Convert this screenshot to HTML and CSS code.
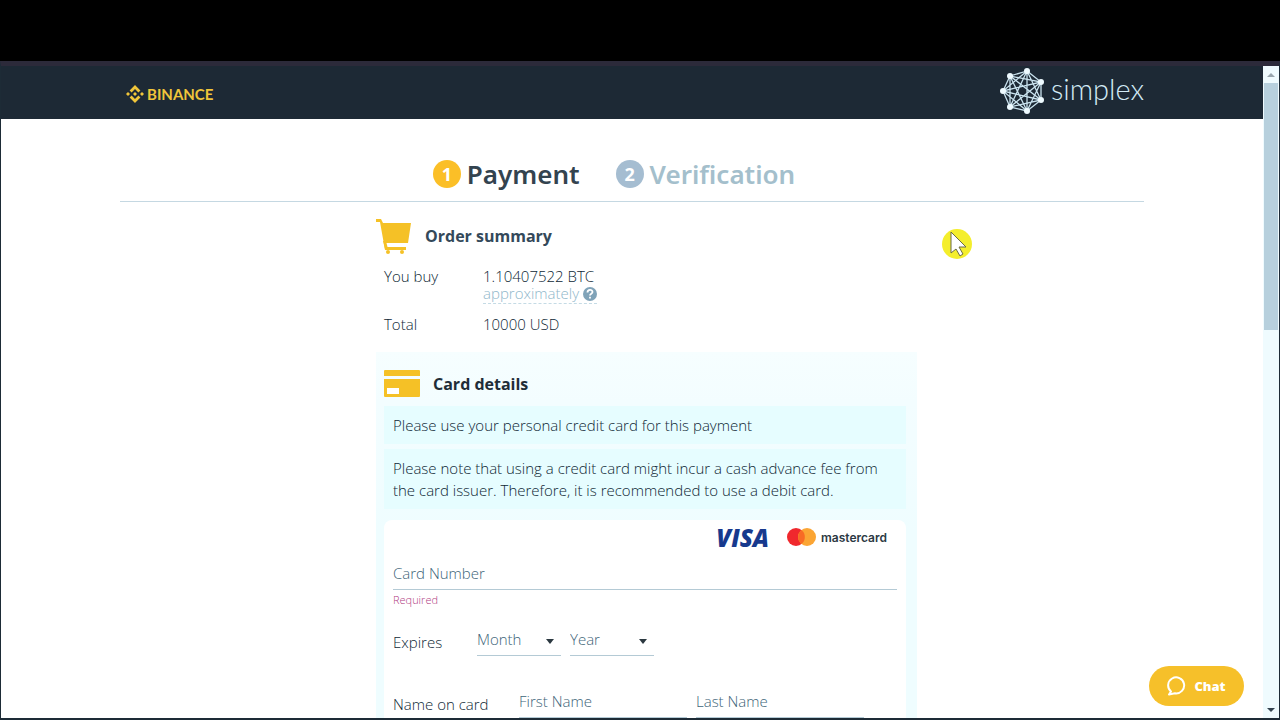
FILE: index.html
```html
<!DOCTYPE html>
<html lang="en">
<head>
    <meta charset="UTF-8">
    <meta name="viewport" content="width=device-width, initial-scale=1.0">
    <title>Simplex Payment</title>
    <link rel="stylesheet" href="styles.css">
</head>
<body>
    <div class="top-bar"></div>
    <div class="window">
        <div class="page">
            <header class="header">
                <div class="container header-inner">
                    <a href="#" class="binance">
                        <svg width="18" height="18" viewBox="0 0 18 18" fill="#f0c53a">
                            <path d="M5.600 7.400L9 4l3.400 3.400 2-2L9 0 3.600 5.400zM0 9l2-2 2 2-2 2zM5.600 10.600L9 14l3.400-3.400 2 2L9 18l-5.400-5.400zM14 9l2-2 2 2-2 2zM11 9L9 7 7 9l2 2z"/>
                        </svg>
                        <span>BINANCE</span>
                    </a>
                    <a href="#" class="simplex">
                        <svg width="45" height="48" viewBox="0 0 45 48">
                            <g fill="none" stroke="#c9e2ee" stroke-width="1.300">
                                <path d="M27 4L10 9 3 24l7 16 17 4 14-11V15z"/>
                                <path d="M27 4L3 24l24 20 14-29L10 9v31l31-7z"/>
                                <path d="M27 4L10 40l31-25L3 24l38 9L10 9l17 35z"/>
                            </g>
                            <g fill="#eefaff">
                                <circle cx="27" cy="4" r="3"/>
                                <circle cx="10" cy="9" r="3"/>
                                <circle cx="3" cy="24" r="3"/>
                                <circle cx="10" cy="40" r="3"/>
                                <circle cx="27" cy="44" r="3"/>
                                <circle cx="41" cy="33" r="3"/>
                                <circle cx="41" cy="15" r="3"/>
                            </g>
                        </svg>
                        <span>simplex</span>
                    </a>
                </div>
            </header>

            <main class="container">
                <nav class="steps">
                    <div class="step active"><span class="number">1</span>Payment</div>
                    <div class="step"><span class="number">2</span>Verification</div>
                </nav>

                <div class="content">
                    <section class="order">
                        <h2 class="order-title">
                            <svg width="36" height="36" viewBox="0 0 36 36">
                                <path d="M0 1h5l2 4h28l-3 20H10l1 4h19v3H9L4 4H0z" fill="#f5c126"/>
                                <path d="M9 25h23v3H10z" fill="#fff"/>
                                <path d="M7 23l2 8h3l-2-8z" fill="#f5c126"/>
                                <circle cx="12" cy="34" r="2" fill="#f5c126"/>
                                <circle cx="26" cy="34" r="2" fill="#f5c126"/>
                            </svg>
                            Order summary
                        </h2>
                        <dl class="summary">
                            <dt>You buy</dt>
                            <dd>
                                1.10407522 BTC
                                <span class="approx">approximately
                                    <svg width="14" height="14" viewBox="0 0 14 14">
                                        <circle cx="7" cy="7" r="7" fill="#80a3b8"/>
                                        <path d="M4.500 5.500c0-3.500 5-3.300 5-.5C9.500 6.800 7 6.600 7 8.500M7 9.800v1.700" fill="none" stroke="#fff" stroke-width="1.800"/>
                                    </svg>
                                </span>
                            </dd>
                            <dt>Total</dt>
                            <dd>10000 USD</dd>
                        </dl>
                    </section>

                    <section class="card-panel">
                        <h2 class="card-title">
                            <svg width="36" height="27" viewBox="0 0 36 27">
                                <path d="M1 0h34a1 1 0 0 1 1 1v5H0V1a1 1 0 0 1 1-1zM0 9h36v17a1 1 0 0 1-1 1H1a1 1 0 0 1-1-1z" fill="#f5c126"/>
                                <path d="M3 18h12v6H3z" fill="#fff"/>
                            </svg>
                            Card details
                        </h2>
                        <p class="notice">Please use your personal credit card for this payment</p>
                        <p class="notice">Please note that using a credit card might incur a cash advance fee from the card issuer. Therefore, it is recommended to use a debit card.</p>

                        <form class="card-form">
                            <div class="brands">
                                <span class="visa">VISA</span>
                                <span class="mastercard">
                                    <svg width="29" height="18" viewBox="0 0 29 18">
                                        <circle cx="9" cy="9" r="9" fill="#f0282d"/>
                                        <circle cx="20" cy="9" r="9" fill="#fba534"/>
                                        <path d="M14.500 2a9 9 0 0 1 0 14 9 9 0 0 1 0-14z" fill="#f86b25"/>
                                    </svg>
                                    mastercard
                                </span>
                            </div>
                            <input type="text" class="field" placeholder="Card Number" aria-label="Card Number">
                            <div class="error">Required</div>
                            <div class="row expires">
                                <label for="month">Expires</label>
                                <span class="select"><select id="month"><option>Month</option></select></span>
                                <span class="select"><select id="year" aria-label="Year"><option>Year</option></select></span>
                            </div>
                            <div class="row names">
                                <label for="first-name">Name on card</label>
                                <input type="text" id="first-name" class="field" placeholder="First Name">
                                <input type="text" class="field" placeholder="Last Name" aria-label="Last Name">
                            </div>
                        </form>
                    </section>
                </div>
            </main>
        </div>
        <div class="scrollbar">
            <div class="arrow up"></div>
            <div class="thumb"></div>
            <div class="arrow down"></div>
        </div>
    </div>

    <button type="button" class="chat">
        <svg width="20" height="20" viewBox="0 0 20 20">
            <path d="M4 15.500A8 8 0 1 1 8 17.300L2 18.500z" fill="none" stroke="#fff" stroke-width="2" stroke-linejoin="round"/>
        </svg>
        Chat
    </button>

    <div class="pointer">
        <svg width="32" height="32" viewBox="0 0 32 32">
            <circle cx="16" cy="16" r="15" fill="#f4ee2c"/>
            <path d="M10 4v21l5-4 4 7 3-2-4-7h7z" fill="#fff" stroke="#6b6b45" stroke-width="1"/>
        </svg>
    </div>
</body>
</html>
```
FILE: styles.css
```css
* {
    box-sizing: border-box;
}

body {
    font-family: "Open Sans", sans-serif;
    font-size: 15px;
    font-weight: 300;
    color: #0e2735;
    margin: 0;
    display: flex;
    flex-direction: column;
    height: 100vh;
    overflow: hidden;
    background-color: #fff;
}

h2, p, dl, dd {
    margin: 0;
}

a {
    text-decoration: none;
}

.top-bar {
    flex: none;
    height: 61px;
    background-color: #000;
}

.window {
    flex: 1;
    min-height: 0;
    display: flex;
    border: solid #1d2b36;
    border-width: 0 1px 2px;
    border-top: 5px solid #2c2a3a;
}

.page {
    flex: 1;
    overflow: hidden;
}

.container {
    max-width: 1024px;
    margin: 0 auto;
}

.header {
    background-color: #1d2935;
}

.header-inner {
    height: 53px;
    display: flex;
    justify-content: space-between;
    align-items: center;
    padding-left: 6px;
}

.binance {
    display: flex;
    align-items: center;
    gap: 3px;
    padding-top: 3px;
    font: 700 15px Lato, sans-serif;
    color: #f0c53a;
}

.simplex {
    display: flex;
    align-items: center;
    gap: 6px;
    padding-bottom: 3px;
    font: 300 29px Lato, sans-serif;
    line-height: 32px;
    color: #d3ebf5;
}

.simplex span {
    padding-bottom: 4px;
}

.steps {
    display: flex;
    justify-content: center;
    align-items: center;
    gap: 36px;
    height: 83px;
    padding: 28px 36px 0 0;
    border-bottom: 1px solid #c5d8e2;
}

.step {
    display: flex;
    align-items: center;
    gap: 6px;
    font-family: "Noto Sans", sans-serif;
    font-size: 26px;
    line-height: 36px;
    font-weight: 600;
    color: #a4bfcc;
}

.step.active {
    color: #33434f;
}

.number {
    width: 28px;
    height: 28px;
    border-radius: 50%;
    background-color: #a5bdd1;
    color: #fff;
    font-size: 18px;
    line-height: 28px;
    font-weight: 700;
    text-align: center;
}

.active .number {
    background-color: #fbbf27;
}

.content {
    width: 541px;
    margin-left: 25%;
}

h2 {
    display: flex;
    align-items: center;
    gap: 13px;
    font-size: 16px;
    font-weight: 700;
    color: #34495a;
}

.order {
    padding-top: 16px;
    height: 150px;
}

.summary {
    display: grid;
    grid-template-columns: 99px 1fr;
    row-gap: 11px;
    padding: 13px 8px 0;
    line-height: 18px;
}

.approx {
    display: flex;
    align-items: center;
    gap: 4px;
    width: max-content;
    padding-bottom: 1px;
    line-height: 17px;
    color: #8fb7ca;
    border-bottom: 1px dashed #c5dbe5;
}

.card-panel {
    padding: 18px 11px 8px 8px;
    background: linear-gradient(#f6feff, #f3fdff 50px, #effdff 180px);
}

.card-title {
    color: #1f2d38;
    margin-bottom: 9px;
}

.notice {
    padding: 8px 9px;
    margin-bottom: 5px;
    line-height: 22px;
    background-color: #e6fdff;
}

.card-form {
    margin-top: 11px;
    padding: 4px 9px 40px;
    background-color: #fff;
    border-radius: 8px;
}

.brands {
    display: flex;
    justify-content: flex-end;
    align-items: center;
    gap: 18px;
    height: 26px;
    padding-right: 10px;
}

.visa {
    font: italic 800 24px "Open Sans", sans-serif;
    color: #17398d;
}

.mastercard {
    display: flex;
    align-items: center;
    gap: 5px;
    font: 600 12px Inter, sans-serif;
    color: #2c3943;
}

.field,
select {
    width: 100%;
    height: 32px;
    padding: 0 0 2px;
    border: 0;
    border-bottom: 1px solid #b4cad5;
    border-radius: 0;
    background: none;
    font: 300 15px "Open Sans", sans-serif;
    color: #3d6478;
    outline: none;
}

.field {
    display: block;
}

.card-form > .field {
    margin-top: 8px;
}

.field::placeholder {
    color: #3d6478;
    opacity: 1;
}

.error {
    font-size: 11px;
    line-height: 20px;
    color: #b03a82;
}

.row {
    display: flex;
    align-items: center;
}

.expires {
    gap: 9px;
    margin-top: 14px;
}

.expires label {
    width: 75px;
    padding-top: 3px;
}

.select {
    position: relative;
    width: 84px;
}

.select::after {
    content: "";
    position: absolute;
    right: 7px;
    top: 15px;
    border: 4px solid transparent;
    border-top: 5px solid #2b3840;
    border-bottom: 0;
    pointer-events: none;
}

select {
    display: block;
    appearance: none;
}

.names {
    gap: 9px;
    margin-top: 30px;
}

.names label {
    width: 117px;
    flex: none;
    padding-top: 3px;
}

.names .field {
    width: 168px;
}

.scrollbar {
    width: 16px;
    display: flex;
    flex-direction: column;
    align-items: center;
    background-color: #effbfe;
}

.thumb {
    width: 14px;
    height: 247px;
    margin: 6px 0 auto;
    background-color: #b7d0dd;
}

.arrow {
    border: 4px solid transparent;
}

.up {
    margin-top: 7px;
    border-top: 0;
    border-bottom-color: #98a5ad;
}

.down {
    margin-bottom: 6px;
    border-bottom: 0;
    border-top-color: #33434f;
}

.chat {
    position: fixed;
    right: 36px;
    bottom: 14px;
    width: 95px;
    height: 40px;
    display: flex;
    justify-content: center;
    align-items: center;
    gap: 7px;
    padding: 0;
    border: 0;
    border-radius: 20px;
    background-color: #f6c02a;
    color: #fff;
    font: 800 13px "Open Sans", sans-serif;
    cursor: pointer;
}

.pointer {
    position: absolute;
    left: 941px;
    top: 228px;
    height: 32px;
}
```
